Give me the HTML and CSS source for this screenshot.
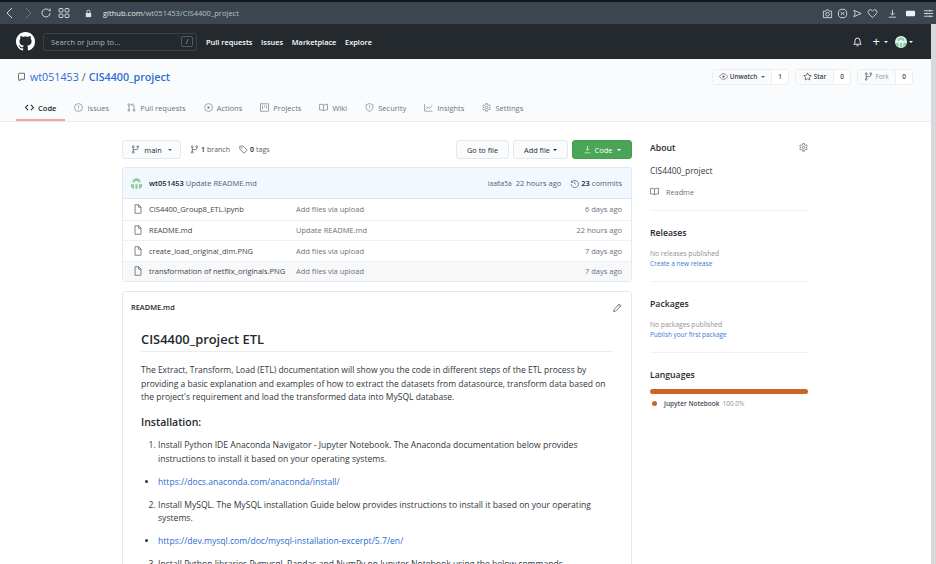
FILE: index.html
```html
<!DOCTYPE html>
<html lang="en">
<head>
<meta charset="utf-8">
<title>wt051453/CIS4400_project</title>
<link rel="stylesheet" href="styles.css">
</head>
<body>
<svg class="defs" width="0" height="0">
  <symbol id="file" viewBox="0 0 16 16"><path fill="none" stroke="currentColor" stroke-width="1.4" d="M3.2 1.2h6l3.6 3.6v10H3.2zM9 1.2v4h4"/></symbol>
  <symbol id="branch" viewBox="0 0 16 16"><g fill="none" stroke="currentColor" stroke-width="1.4"><circle cx="4" cy="3" r="1.6"/><circle cx="4" cy="13" r="1.6"/><circle cx="12" cy="3" r="1.6"/><path d="M4 4.6v6.8M12 4.6v1.6a2 2 0 0 1-2 2H4"/></g></symbol>
  <symbol id="gear" viewBox="0 0 16 16"><g fill="none" stroke="currentColor" stroke-width="1.3"><path d="M6.6 1h2.8l.4 2 1.6.9 1.9-.7 1.4 2.4-1.5 1.3v1.8l1.5 1.3-1.4 2.4-1.9-.7-1.6.9-.4 2H6.6l-.4-2-1.6-.9-1.9.7-1.4-2.4 1.5-1.3V7.1L1.3 5.8l1.4-2.4 1.9.7 1.6-.9z"/><circle cx="8" cy="8" r="2.2"/></g></symbol>
  <symbol id="book" viewBox="0 0 16 16"><path fill="none" stroke="currentColor" stroke-width="1.3" d="M8 3.5C6.5 2.3 4 2.2 1 2.4v10c3-.2 5.500-.1 7 1.100 1.500-1.200 4-1.300 7-1.100v-10c-3-.2-5.500-.1-7 1.100zM8 3.500v10"/></symbol>
  <symbol id="identicon" viewBox="0 0 16 16"><path fill="#7fd0a3" d="M3 6.500C3.500 3 5.500 1.500 8 1.500s4.500 1.500 5 5h-3V5H6v1.500zM1 9h4v5.500H3.500A4 4 0 0 1 1 11zM11 9h4v2a4 4 0 0 1-2.500 3.500H11zM6.700 9h2.600v5.500H6.700z"/></symbol>
</svg>

<div class="browser">
  <div class="browser-nav">
    <svg class="b-icon" viewBox="0 0 12 12"><path d="M8 1 3 6l5 5" class="bs"/></svg>
    <svg class="b-icon dim" viewBox="0 0 12 12"><path d="m4 1 5 5-5 5" class="bs"/></svg>
    <svg class="b-icon" viewBox="0 0 12 12"><path d="M10 6a4 4 0 1 1-1.200-2.900L10 4.300V1.500" class="bs"/></svg>
    <svg class="b-icon" viewBox="0 0 12 12"><g class="bs"><rect x="1" y="1.500" width="4" height="3.500" rx="1"/><rect x="7" y="1.500" width="4" height="3.500" rx="1"/><rect x="1" y="7" width="4" height="3.500" rx="1"/><rect x="7" y="7" width="4" height="3.500" rx="1"/></g></svg>
  </div>
  <svg class="lock" viewBox="0 0 10 10"><path fill="#dfe3e6" d="M2 4.500h6V9H2z"/><path fill="none" stroke="#dfe3e6" d="M3.300 4.500V3a1.700 1.700 0 0 1 3.400 0v1.500"/></svg>
  <div class="url">github.com<span class="url-path">/wt051453/CIS4400_project</span></div>
  <div class="browser-tools">
    <svg class="t-icon" viewBox="0 0 12 12"><g class="bs"><path d="M1.500 3.500h2.500l1-1.500h2l1 1.500h2.500v7h-9z"/><circle cx="6" cy="6.800" r="2"/></g></svg>
    <svg class="t-icon" viewBox="0 0 12 12"><g class="bs"><path d="M3.500 1.500h5L10.500 4v4l-2 2.500h-5L1.500 8V4z"/><path d="m4 4.500 4 3M8 4.500l-4 3"/></g></svg>
    <svg class="t-icon" viewBox="0 0 12 12"><path class="bs" d="M2 2.500 10 6l-8 3.500L3.500 6z"/></svg>
    <svg class="t-icon" viewBox="0 0 12 12"><path class="bs" d="M6 10.500 1.800 6.200a2.500 2.500 0 0 1 3.600-3.500l.6.600.6-.6a2.500 2.500 0 0 1 3.600 3.500z"/></svg>
    <svg class="t-icon gap" viewBox="0 0 12 12"><path class="bs" d="M6 2v5.500M3.800 5.500 6 7.700l2.200-2.200M2 10h8"/></svg>
    <svg class="t-icon wide" viewBox="0 0 12 12"><rect x="1" y="3" width="10" height="6" rx="1.200" fill="#eef1f3"/></svg>
    <svg class="t-icon wide" viewBox="0 0 12 12"><path class="bs" d="M1 3h10M1 6h10M1 9h10M7.500 2v2M4 5v2M7.500 8v2"/></svg>
  </div>
</div>

<div class="page">
  <header class="gh-header">
    <svg class="gh-logo" viewBox="0 0 16 16"><path fill="#fff" d="M8 0C3.580 0 0 3.580 0 8c0 3.540 2.290 6.530 5.470 7.590.4.070.55-.17.55-.38 0-.19-.010-.82-.010-1.490-2.010.37-2.530-.49-2.690-.94-.090-.23-.48-.94-.82-1.130-.28-.15-.68-.52-.010-.53.630-.010 1.080.58 1.230.82.720 1.210 1.870.870 2.330.660.070-.52.280-.870.510-1.070-1.780-.2-3.640-.89-3.640-3.950 0-.870.310-1.590.820-2.150-.080-.2-.360-1.020.080-2.120 0 0 .670-.21 2.200.820.640-.18 1.320-.27 2-.27s1.360.090 2 .27c1.530-1.040 2.200-.82 2.200-.82.440 1.100.160 1.920.080 2.120.510.560.820 1.270.820 2.150 0 3.070-1.870 3.750-3.650 3.950.290.250.540.730.540 1.480 0 1.070-.010 1.930-.010 2.200 0 .210.150.460.550.380A8.010 8.010 0 0 0 16 8c0-4.420-3.580-8-8-8z"/></svg>
    <div class="search"><span>Search or jump to...</span><kbd>/</kbd></div>
    <nav class="gh-nav"><a>Pull requests</a><a>Issues</a><a>Marketplace</a><a>Explore</a></nav>
    <div class="gh-right">
      <svg class="bell" viewBox="0 0 12 12"><path fill="none" stroke="#fff" d="M2 9c1-1 1.300-2 1.300-4a2.700 2.700 0 0 1 5.400 0c0 2 .3 3 1.300 4zM5 10.800h2"/></svg>
      <span class="plus">+</span><i class="caret white"></i>
      <svg class="avatar small" viewBox="0 0 16 16"><use href="#identicon"/></svg><i class="caret white"></i>
    </div>
  </header>

  <section class="repo-head">
    <div class="repo-top">
      <h1 class="repo-title">
        <svg class="repo-icon" viewBox="0 0 12 12"><path fill="none" stroke="#586069" stroke-width="1.200" d="M3.500 9H10V1H3a1 1 0 0 0-1 1v7.500a1 1 0 0 0 1 1h1M4 10v1.500"/></svg>
        <a>wt051453</a><span class="slash">/</span><a class="repo-name">CIS4400_project</a>
      </h1>
      <div class="actions">
        <div class="pair"><span class="pair-main m-watch">
          <svg class="pi" viewBox="0 0 16 16"><path fill="none" stroke="currentColor" stroke-width="1.300" d="M1 8c2-3.500 4.500-5 7-5s5 1.500 7 5c-2 3.500-4.500 5-7 5s-5-1.500-7-5z"/><circle cx="8" cy="8" r="2" fill="currentColor"/></svg>
          Unwatch <i class="caret grey"></i></span><span class="pair-count">1</span></div>
        <div class="pair"><span class="pair-main">
          <svg class="pi star" viewBox="0 0 16 16"><path fill="none" stroke="currentColor" stroke-width="1.300" d="m8 1.500 2 4.300 4.700.6-3.400 3.200.9 4.700L8 12l-4.200 2.300.9-4.700L1.300 6.400 6 5.800z"/></svg>
          Star</span><span class="pair-count">0</span></div>
        <div class="pair"><span class="pair-main faint">
          <svg class="pi" viewBox="0 0 16 16"><use href="#branch"/></svg>
          Fork</span><span class="pair-count">0</span></div>
      </div>
    </div>
    <nav class="tabs">
      <a class="tab active"><svg class="ti" viewBox="0 0 16 16"><path fill="none" stroke="#24292e" stroke-width="1.800" d="M5.500 3.500 1 8l4.500 4.500M10.500 3.500 15 8l-4.500 4.500"/></svg>Code</a>
      <a class="tab"><svg class="ti" viewBox="0 0 16 16"><circle cx="8" cy="8" r="7" fill="none" stroke="currentColor" stroke-width="1.200"/><path d="M8 4.500v4M8 10.500v1.200" stroke="currentColor" stroke-width="1.300"/></svg>Issues</a>
      <a class="tab"><svg class="ti" viewBox="0 0 16 16"><g fill="none" stroke="currentColor" stroke-width="1.300"><circle cx="3.500" cy="3" r="1.700"/><circle cx="3.500" cy="13" r="1.700"/><circle cx="12.500" cy="13" r="1.700"/><path d="M3.500 4.700v6.600M12.500 11.300V5a2 2 0 0 0-2-2H8M9.500 1 7.500 3l2 2"/></g></svg>Pull requests</a>
      <a class="tab"><svg class="ti" viewBox="0 0 16 16"><circle cx="8" cy="8" r="7" fill="none" stroke="currentColor" stroke-width="1.200"/><path d="m6.300 5 4.500 3-4.500 3z" fill="currentColor"/></svg>Actions</a>
      <a class="tab"><svg class="ti" viewBox="0 0 16 16"><g fill="none" stroke="currentColor" stroke-width="1.300"><rect x="1" y="1.500" width="14" height="13"/><path d="M4.500 4.500v6M8 4.500v3M11.500 4.500v5"/></g></svg>Projects</a>
      <a class="tab"><svg class="ti" viewBox="0 0 16 16"><use href="#book"/></svg>Wiki</a>
      <a class="tab"><svg class="ti" viewBox="0 0 16 16"><g fill="none" stroke="currentColor" stroke-width="1.200"><path d="M8 1 14 3v5c0 3.500-3 6-6 7-3-1-6-3.500-6-7V3z"/><path d="M8 4.500v4M8 10.200v1.300"/></g></svg>Security</a>
      <a class="tab"><svg class="ti" viewBox="0 0 16 16"><path fill="none" stroke="currentColor" stroke-width="1.200" d="M1 2v12.500h14M3.500 11 7 7l3 2.500 4.500-5"/></svg>Insights</a>
      <a class="tab"><svg class="ti" viewBox="0 0 16 16"><use href="#gear"/></svg>Settings</a>
    </nav>
  </section>

  <main class="layout">
    <div class="content">
      <div class="file-nav">
        <span class="btn branch-btn"><svg class="pi" viewBox="0 0 16 16"><use href="#branch"/></svg><b>main</b><i class="caret grey"></i></span>
        <span class="meta"><svg class="pi" viewBox="0 0 16 16"><use href="#branch"/></svg><b>1</b> branch</span>
        <span class="meta"><svg class="pi" viewBox="0 0 16 16"><path fill="none" stroke="currentColor" stroke-width="1.300" d="M1.500 2h6l7 7-5.500 5.500-7.500-7z"/><circle cx="5" cy="5.500" r="1" fill="currentColor"/></svg><b>0</b> tags</span>
        <span class="spacer"></span>
        <span class="btn goto">Go to file</span>
        <span class="btn addfile">Add file <i class="caret dark"></i></span>
        <span class="btn green"><svg class="pi" viewBox="0 0 12 12"><path fill="none" stroke="#dff0e2" d="M6 1v6M3.800 5 6 7.200 8.200 5M2 10.500h8"/></svg>Code<i class="caret white"></i></span>
      </div>

      <div class="files">
        <div class="commit">
          <svg class="avatar" viewBox="0 0 16 16"><use href="#identicon"/></svg>
          <span class="commit-msg"><b>wt051453</b> Update README.md</span>
          <span class="sha">iaa6a5a</span>
          <span class="commit-time">22 hours ago</span>
          <span class="commits"><svg class="pi" viewBox="0 0 16 16"><g fill="none" stroke="currentColor" stroke-width="1.300"><path d="M2.500 3v3h3M2.700 6A6.500 6.500 0 1 1 2 9"/><path d="M8 4.500V8l2.500 1.500"/></g></svg><b>23</b> commits</span>
        </div>
        <div class="file-row"><svg class="fi" viewBox="0 0 16 16"><use href="#file"/></svg><span class="fname">CIS4400_Group8_ETL.ipynb</span><span class="fmsg">Add files via upload</span><span class="ftime">6 days ago</span></div>
        <div class="file-row"><svg class="fi" viewBox="0 0 16 16"><use href="#file"/></svg><span class="fname">README.md</span><span class="fmsg">Update README.md</span><span class="ftime">22 hours ago</span></div>
        <div class="file-row"><svg class="fi" viewBox="0 0 16 16"><use href="#file"/></svg><span class="fname">create_load_original_dim.PNG</span><span class="fmsg">Add files via upload</span><span class="ftime">7 days ago</span></div>
        <div class="file-row hover"><svg class="fi" viewBox="0 0 16 16"><use href="#file"/></svg><span class="fname">transformation of netflix_originals.PNG</span><span class="fmsg">Add files via upload</span><span class="ftime">7 days ago</span></div>
      </div>

      <article class="readme">
        <div class="readme-head"><span>README.md</span>
          <svg class="pencil" viewBox="0 0 16 16"><path fill="none" stroke="#444d56" stroke-width="1.300" d="M11 1.800 14.200 5 5 14.200l-4 1 1-4zM9.500 3.500l3 3"/></svg>
        </div>
        <div class="md">
          <h1>CIS4400_project ETL</h1>
          <p>The Extract, Transform, Load (ETL) documentation will show you the code in different steps of the ETL process by providing a basic explanation and examples of how to extract the datasets from datasource, transform data based on the project's requirement and load the transformed data into MySQL database.</p>
          <h2>Installation:</h2>
          <ol><li>Install Python IDE Anaconda Navigator - Jupyter Notebook. The Anaconda documentation below provides instructions to install it based on your operating systems.</li></ol>
          <ul><li><a>https://docs.anaconda.com/anaconda/install/</a></li></ul>
          <ol start="2"><li>Install MySQL. The MySQL installation Guide below provides instructions to install it based on your operating systems.</li></ol>
          <ul><li><a>https://dev.mysql.com/doc/mysql-installation-excerpt/5.7/en/</a></li></ul>
          <ol start="3"><li>Install Python libraries Pymysql, Pandas and NumPy on Jupyter Notebook using the below commands.</li></ol>
        </div>
      </article>
    </div>

    <aside class="side">
      <section class="side-box about">
        <div class="about-head"><h2>About</h2><svg class="side-gear" viewBox="0 0 16 16"><use href="#gear"/></svg></div>
        <p class="desc">CIS4400_project</p>
        <p class="readme-link"><svg class="pi" viewBox="0 0 16 16"><use href="#book"/></svg>Readme</p>
      </section>
      <section class="side-box"><h2>Releases</h2><p class="none">No releases published</p><a class="small-link">Create a new release</a></section>
      <section class="side-box"><h2>Packages</h2><p class="none">No packages published</p><a class="small-link">Publish your first package</a></section>
      <section class="side-box last"><h2>Languages</h2><div class="lang-bar"></div>
        <p class="lang"><i class="dot"></i><b>Jupyter Notebook</b> <span>100.0%</span></p></section>
    </aside>
  </main>
  <div class="scrollbar"></div>
</div>
</body>
</html>
```
FILE: styles.css
```css
* { box-sizing: border-box; }
html, body { margin: 0; height: 564px; overflow: hidden; }
body { width: 936px; background: #fff; font-family: "Open Sans", "Noto Sans", sans-serif; color: #24292e; font-size: 8px; position: relative; }
.defs { position: absolute; }
h1, h2, p, ul, ol { margin: 0; padding: 0; }
i { font-style: normal; }
svg { display: block; flex: none; }
.bs { fill: none; stroke: #d5dadd; stroke-width: 1; }

.browser { height: 24px; background: #3b4650; border-top: 2px solid #15181b; display: flex; align-items: center; }
.browser-nav { display: flex; gap: 6px; padding-left: 4px; width: 84px; }
.b-icon { width: 12px; height: 12px; }
.dim { opacity: .35; }
.lock { width: 9px; height: 9px; margin-right: 10px; }
.url { color: #e8ebed; font-size: 7.550px; }
.url-path { color: #b9c1c7; }
.browser-tools { margin-left: auto; display: flex; padding-right: 2px; align-items: center; }
.t-icon { width: 11px; height: 11px; margin-left: 4px; }
.t-icon.gap { margin-left: 9px; }
.t-icon.wide { margin-left: 7px; }

.page { position: relative; height: 540px; overflow: hidden; }
.scrollbar { position: absolute; right: 0; top: 0; bottom: 0; width: 5px; background: #d6d8da; }

.gh-header { height: 35px; background: #24292e; display: flex; align-items: center; padding-left: 16px; padding-right: 23px; color: #fff; }
.gh-logo { width: 19px; height: 19px; }
.search { width: 154px; height: 18px; margin-left: 8px; border: 1px solid #3a4046; border-radius: 3px; display: flex; align-items: center; justify-content: space-between; padding: 0 3px 0 7px; color: #aeb3b8; font-size: 7.600px; }
.search kbd { width: 12px; height: 11px; border: 1px solid #555b60; border-radius: 2px; font: 7px "Open Sans", sans-serif; text-align: center; line-height: 9px; color: #aeb3b8; }
.gh-nav { display: flex; gap: 8.700px; margin-left: 9px; font-size: 7.400px; font-weight: 600; }
.gh-right { margin-left: auto; display: flex; align-items: center; }
.bell { width: 11px; height: 11px; margin-right: 10px; }
.plus { font-size: 13px; line-height: 13px; margin-right: 2px; }
.caret { display: inline-block; width: 0; height: 0; border: 2px solid transparent; border-top-color: currentColor; border-bottom: 0; vertical-align: middle; }
.caret.white { color: #fff; margin-left: 2px; }
.caret.grey { color: #586069; margin-left: 2px; }
.caret.dark { color: #24292e; }
.avatar { width: 13px; height: 13px; border-radius: 50%; background: #f0f3f2; flex: none; }
.avatar.small { margin-left: 7px; width: 12px; height: 12px; }

.repo-head { height: 63px; background: #fafbfc; border-bottom: 1px solid #eaecef; display: flex; flex-direction: column; }
.repo-top { display: flex; justify-content: space-between; align-items: center; padding: 0 23px 0 17px; height: 36px; }
.repo-title { display: flex; align-items: center; font-size: 10.700px; font-weight: 400; color: #0366d6; }
.repo-title a { color: #2a6dd2; }
.repo-name { font-weight: 600; }
.slash { color: #586069; margin: 0 3px; }
.repo-icon { width: 9px; height: 10px; margin-right: 4px; }
.actions { display: flex; gap: 6px; }
.pair { display: flex; height: 16px; border: 1px solid #eceef0; border-radius: 3px; font-size: 6.400px; background: #fff; }
.pair-main { width: 38px; display: flex; align-items: center; justify-content: center; gap: 2px; font-weight: 600; color: #3a4148; background: #fafbfc; border-right: 1px solid #eceef0; }
.pair-main.m-watch { width: 59px; }
.pair-main.faint { color: #8b9197; font-weight: 400; }
.pair-count { width: 16px; text-align: center; line-height: 14px; font-weight: 600; color: #444d56; }
.pi { width: 9px; height: 9px; color: #586069; }
.star { color: #444d56; }
.tabs { display: flex; padding-left: 16px; height: 27px; margin-top: auto; }
.tab { display: flex; align-items: center; gap: 4px; padding: 2px 9.050px 0; color: #6a737d; font-size: 7.500px; border-bottom: 2px solid transparent; }
.tab.active { color: #24292e; font-weight: 600; border-bottom-color: #f4a691; }
.ti { width: 9px; height: 9px; color: #7a828a; }

.layout { display: grid; grid-template-columns: 510px 158px; gap: 18px; padding: 18px 0 0 122px; }
.file-nav { display: flex; align-items: center; height: 19px; font-size: 7px; color: #586069; }
.btn { height: 19px; padding: 0 9px; border: 1px solid #e5e7ea; border-radius: 3px; background: #fafbfc; display: flex; align-items: center; gap: 3px; color: #24292e; font-weight: 500; font-size: 7.400px; margin-left: 4px; justify-content: center; }
.branch-btn { margin: 0 9px 0 0; width: 59px; gap: 4px; }
.branch-btn b { font-weight: 500; }
.goto { width: 53px; }
.addfile { width: 55px; }
.meta { display: flex; align-items: center; gap: 2px; margin-right: 9px; }
.meta b { color: #24292e; font-weight: 600; }
.spacer { flex: 1; }
.btn.green { background: #4aa557; border-color: #469c53; color: #fff; width: 60px; }

.files { margin-top: 8px; border: 1px solid #e6e9ec; border-radius: 3px; font-size: 7.500px; }
.commit { height: 31px; background: #f1f8ff; border-bottom: 1px solid #dbe6f2; display: flex; align-items: center; padding: 0 9px 0 7px; color: #586069; }
.commit-msg { margin-left: 6px; }
.commit-msg b { font-weight: 600; color: #24292e; }
.sha { margin-left: auto; font-size: 6.600px; }
.commit-time { margin-left: 4px; }
.commits { display: flex; align-items: center; gap: 2px; margin-left: 9px; }
.commits b { color: #24292e; font-weight: 600; }
.file-row { height: 20.500px; display: flex; align-items: center; padding: 0 9px 0 10px; border-top: 1px solid #eef0f2; color: #6a737d; }
.commit + .file-row { border-top: 0; }
.file-row.hover { background: #f6f8fa; }
.fi { width: 10px; height: 10px; color: #6a737d; }
.fname { width: 147px; margin-left: 6px; color: #3c444c; white-space: nowrap; }
.ftime { margin-left: auto; }

.readme { margin-top: 9px; border: 1px solid #e6e9ec; border-radius: 3px; height: 400px; }
.readme-head { height: 30px; display: flex; align-items: center; justify-content: space-between; padding: 0 9px 0 8px; font-size: 7.400px; font-weight: 600; color: #24292e; }
.pencil { width: 9px; height: 9px; }
.md { padding: 8px 18px; font-size: 8.500px; line-height: 13.600px; color: #2f363d; }
.md h1 { font-size: 12.900px; line-height: 18px; font-weight: 600; padding-bottom: 3px; border-bottom: 1px solid #eaecef; color: #24292e; }
.md p { margin-top: 11px; }
.md h2 { font-size: 10.500px; font-weight: 600; line-height: 14px; margin: 11px 0 10.500px; color: #24292e; }
.md ol, .md ul { padding-left: 17px; margin-bottom: 9.400px; font-size: 8.600px; }
.md a { color: #2a6dd2; font-size: 8.600px; }

.side { font-size: 7px; }
.side-box { padding-bottom: 12px; margin-bottom: 16px; border-bottom: 1px solid #f0f1f3; width: 158px; }
.side-box.last { border-bottom: 0; }
.side-box h2 { font-size: 8.700px; font-weight: 600; line-height: 12px; margin-bottom: 10px; color: #24292e; }
.about { padding-bottom: 13px; }
.about-head { display: flex; justify-content: space-between; align-items: center; padding-top: 2px; }
.about-head h2 { margin-bottom: 0; }
.side-gear { width: 9px; height: 9px; color: #586069; margin-top: -2px; }
.desc { font-size: 8.400px; color: #33393f; line-height: 12px; margin: 11px 0 9.500px; }
.readme-link { display: flex; align-items: center; gap: 7px; color: #6a737d; font-size: 7.300px; }
.none { color: #8b9197; font-size: 6.700px; line-height: 10px; }
.small-link { color: #3a78d6; font-size: 6.400px; line-height: 10px; display: block; }
.lang-bar { height: 5px; border-radius: 3px; background: #cc6428; margin-top: -2px; }
.lang { display: flex; align-items: center; margin: 5px 0 0 2px; font-size: 6.500px; color: #8b9197; gap: 3px; }
.lang b { font-weight: 600; color: #444d56; }
.dot { width: 5px; height: 5px; border-radius: 50%; background: #cc6428; margin-right: 4px; }
```
